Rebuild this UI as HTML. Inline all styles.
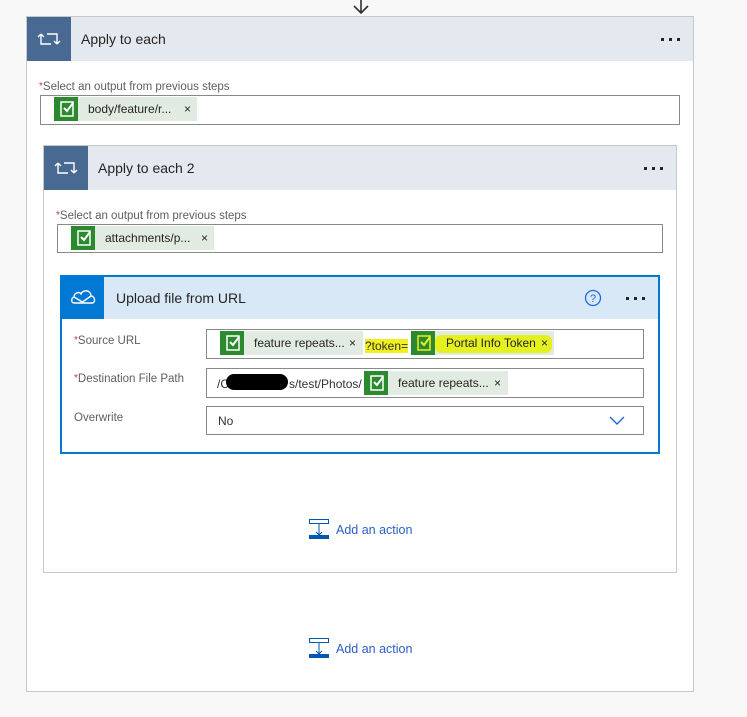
<!DOCTYPE html>
<html><head><style>
*{margin:0;padding:0;box-sizing:border-box}
body{width:747px;height:717px;background:#f8f8f8;font-family:"Liberation Sans",sans-serif;position:relative;overflow:hidden;color:#323130}
.a{position:absolute}
.card{position:absolute;background:#fff;border:1px solid #c8c8c8}
.hdr{position:absolute;background:#e4e8ef}
.ib{position:absolute;background:#486991}
.t{position:absolute;font-size:14px;color:#252423;white-space:nowrap}
.lbl{position:absolute;font-size:11.5px;color:#605e5c;white-space:nowrap}
.lbl b{color:#d13438;font-weight:normal;font-size:10px;vertical-align:top}
.inp{position:absolute;background:#fff;border:1px solid #8a8886}
.tok{position:absolute;height:24px;background:#e1ebe1;font-size:12px;color:#252423;white-space:nowrap;line-height:24px}
.tok .g{position:absolute;left:0;top:0;width:24px;height:24px;background:#2c8a2e}
.tok .x{position:absolute;font-size:12px;color:#252423}
.dots{position:absolute;width:24px;height:3px}
.dots i{position:absolute;top:0;width:3px;height:3px;background:#252423}
.add{position:absolute;font-size:12.5px;color:#2a5ec8;white-space:nowrap}
</style></head><body>

<svg class="a" style="left:351px;top:0" width="20" height="16"><path d="M10 0V13M3 6L10 13L17 6" stroke="#323130" stroke-width="1.6" fill="none"/></svg>

<div class="card" style="left:26px;top:16px;width:668px;height:676px"></div>
<div class="hdr" style="left:27px;top:17px;width:666px;height:44px"></div>
<div class="ib" style="left:27px;top:17px;width:44px;height:44px"></div>
<svg class="a" style="left:37px;top:29px" width="24" height="20"><path d="M4 5V15H14M4 5L1 8M4 5L7 8M20 15V5H10M20 15L17 12M20 15L23 12" stroke="#fff" stroke-width="1.4" fill="none"/></svg>
<div class="t" style="left:81px;top:31px">Apply to each</div>
<div class="dots" style="left:661px;top:38px"><i style="left:0"></i><i style="left:8px"></i><i style="left:16px"></i></div>

<div class="lbl" style="left:39px;top:81px"><b>*</b>Select an output from previous steps</div>
<div class="inp" style="left:40px;top:95px;width:640px;height:30px"></div>
<div class="tok" style="left:54px;top:97px;width:143px"><div class="g"></div><svg class="a" style="left:4px;top:3px" width="17" height="18"><rect x="3" y="2" width="12" height="14" fill="none" stroke="#fff" stroke-width="1.5"/><path d="M6 8L9 11L15 3" stroke="#fff" stroke-width="2" fill="none"/></svg><span class="a" style="left:34px">body/feature/r...</span><span class="x" style="left:130px">×</span></div>

<div class="card" style="left:43px;top:145px;width:634px;height:428px"></div>
<div class="hdr" style="left:44px;top:146px;width:632px;height:44px"></div>
<div class="ib" style="left:44px;top:146px;width:44px;height:44px"></div>
<svg class="a" style="left:54px;top:158px" width="24" height="20"><path d="M4 5V15H14M4 5L1 8M4 5L7 8M20 15V5H10M20 15L17 12M20 15L23 12" stroke="#fff" stroke-width="1.4" fill="none"/></svg>
<div class="t" style="left:98px;top:160px">Apply to each 2</div>
<div class="dots" style="left:644px;top:167px"><i style="left:0"></i><i style="left:8px"></i><i style="left:16px"></i></div>

<div class="lbl" style="left:56px;top:210px"><b>*</b>Select an output from previous steps</div>
<div class="inp" style="left:57px;top:224px;width:606px;height:29px"></div>
<div class="tok" style="left:71px;top:226px;width:143px"><div class="g"></div><svg class="a" style="left:4px;top:3px" width="17" height="18"><rect x="3" y="2" width="12" height="14" fill="none" stroke="#fff" stroke-width="1.5"/><path d="M6 8L9 11L15 3" stroke="#fff" stroke-width="2" fill="none"/></svg><span class="a" style="left:34px">attachments/p...</span><span class="x" style="left:130px">×</span></div>

<div class="a" style="left:60px;top:275px;width:600px;height:179px;border:2px solid #0078d4;background:#fff"></div>
<div class="a" style="left:62px;top:277px;width:596px;height:42px;background:#d9e8f6"></div>
<div class="a" style="left:62px;top:277px;width:42px;height:42px;background:#0078d4"></div>
<svg class="a" style="left:70px;top:287px" width="28" height="20"><path d="M4 16C1 16 1 11 4 10C4 6 9 4 11 7C13 2 21 3 21 9C25 9 26 16 22 16Z M4 10L14 16M21 9L11 16" stroke="#fff" stroke-width="1.4" fill="none"/></svg>
<div class="t" style="left:116px;top:290px">Upload file from URL</div>
<svg class="a" style="left:584px;top:289px" width="18" height="18"><circle cx="9" cy="9" r="7.5" stroke="#2266e3" stroke-width="1.3" fill="none"/><text x="9" y="13" font-size="11" text-anchor="middle" fill="#2266e3" font-family="Liberation Sans">?</text></svg>
<div class="dots" style="left:626px;top:297px"><i style="left:0"></i><i style="left:8px"></i><i style="left:16px"></i></div>

<div class="lbl" style="left:74px;top:335px"><b>*</b>Source URL</div>
<div class="inp" style="left:206px;top:329px;width:438px;height:30px"></div>
<div class="tok" style="left:220px;top:331px;width:143px"><div class="g"></div><svg class="a" style="left:4px;top:3px" width="17" height="18"><rect x="3" y="2" width="12" height="14" fill="none" stroke="#fff" stroke-width="1.5"/><path d="M6 8L9 11L15 3" stroke="#fff" stroke-width="2" fill="none"/></svg><span class="a" style="left:34px">feature repeats...</span><span class="x" style="left:129px">×</span></div>
<div class="a" style="left:365px;top:335px;height:18px;font-size:12px;line-height:22px;white-space:nowrap;background:linear-gradient(#fff 0,#fff 4px,#f0f020 4px)">?token=</div>
<div class="tok" style="left:411px;top:331px;width:143px;background:#e1ebe1"><div class="g"></div><svg class="a" style="left:4px;top:3px" width="17" height="18"><rect x="3" y="2" width="12" height="14" fill="none" stroke="#e8f020" stroke-width="1.5"/><path d="M6 8L9 11L15 3" stroke="#e8f020" stroke-width="2" fill="none"/></svg><div class="a" style="left:24px;top:4px;width:117px;height:18px;background:#e4f020;border-radius:6px"></div><span class="a" style="left:35px">Portal Info Token</span><span class="x" style="left:130px">×</span></div>

<div class="lbl" style="left:74px;top:373px"><b>*</b>Destination File Path</div>
<div class="inp" style="left:206px;top:368px;width:438px;height:30px"></div>
<div class="a" style="left:217px;top:377px;font-size:12px;white-space:nowrap">/C<span style="display:inline-block;width:60px"></span>s/test/Photos/</div>
<div class="a" style="left:226px;top:374px;width:62px;height:16px;background:#000;border-radius:8px/8px"></div>
<div class="tok" style="left:364px;top:371px;width:144px"><div class="g"></div><svg class="a" style="left:4px;top:3px" width="17" height="18"><rect x="3" y="2" width="12" height="14" fill="none" stroke="#fff" stroke-width="1.5"/><path d="M6 8L9 11L15 3" stroke="#fff" stroke-width="2" fill="none"/></svg><span class="a" style="left:34px">feature repeats...</span><span class="x" style="left:130px">×</span></div>

<div class="lbl" style="left:74px;top:412px">Overwrite</div>
<div class="inp" style="left:206px;top:406px;width:438px;height:29px"></div>
<div class="a" style="left:218px;top:414px;font-size:12px">No</div>
<svg class="a" style="left:608px;top:415px" width="18" height="12"><path d="M2 2L9 9L16 2" stroke="#2266e3" stroke-width="1.4" fill="none"/></svg>

<svg class="a" style="left:309px;top:519px" width="20" height="20"><rect x="0.5" y="0.5" width="19" height="4" fill="none" stroke="#0058b0"/><path d="M10 5V16M7 13L10 16L13 13" stroke="#0058b0" fill="none"/><rect x="0" y="16" width="20" height="4" fill="#0058b0"/></svg>
<div class="add" style="left:336px;top:523px">Add an action</div>

<svg class="a" style="left:309px;top:638px" width="20" height="20"><rect x="0.5" y="0.5" width="19" height="4" fill="none" stroke="#0058b0"/><path d="M10 5V16M7 13L10 16L13 13" stroke="#0058b0" fill="none"/><rect x="0" y="16" width="20" height="4" fill="#0058b0"/></svg>
<div class="add" style="left:336px;top:642px">Add an action</div>

</body></html>
